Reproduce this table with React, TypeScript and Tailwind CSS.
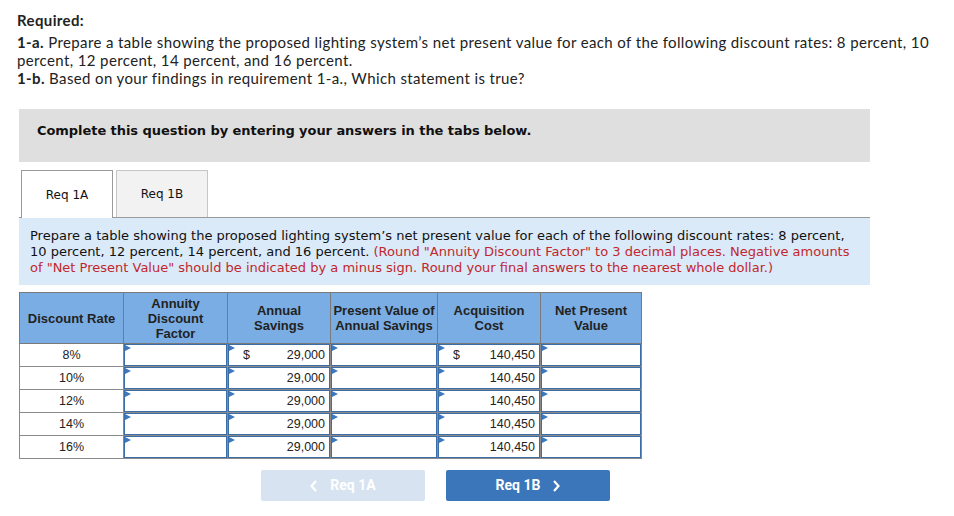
import React from "react";

const rates = ["8%", "10%", "12%", "14%", "16%"];

function Flag() {
  return (
    <svg
      className="absolute left-0 top-0"
      width="6"
      height="7"
      viewBox="0 0 6 7"
    >
      <polygon points="0,0 6,3 0,6" fill="#3a78c2" />
    </svg>
  );
}

function InputCell({ dollar, value }: { dollar?: boolean; value?: string }) {
  return (
    <td className="border border-[#8a8a8a] p-0 h-[23px]">
      <div className="relative h-[22px] border border-[#3d6da6] bg-white flex items-center pr-[4px]">
        <Flag />
        {dollar ? <span className="ml-[14px]">$</span> : null}
        {value ? <span className="ml-auto">{value}</span> : null}
      </div>
    </td>
  );
}

export default function App() {
  return (
    <div className="w-[954px] h-[516px] bg-white overflow-hidden">
      <div
        className="pl-[17px] pt-[11px] pr-[16px] text-[15px] leading-[18px] tracking-[0.38px] text-[#222]"
        style={{ fontFamily: "Lato, 'Open Sans', sans-serif" }}
      >
        <div className="font-bold mb-[4px]">Required:</div>
        <div>
          <span className="font-bold">1-a.</span> Prepare a table showing the proposed lighting
          system’s net present value for each of the following discount rates: 8 percent, 10
          percent, 12 percent, 14 percent, and 16 percent.
        </div>
        <div>
          <span className="font-bold">1-b.</span> Based on your findings in requirement 1-a.,
          Which statement is true?
        </div>
      </div>

      <div
        className="ml-[19px] mt-[22px] w-[851px] h-[53px] bg-[#dfdfdf] pl-[18px] pt-[13px] text-[13px] leading-[18px] tracking-[-0.06px] font-bold text-[#111]"
        style={{ fontFamily: "'DejaVu Sans', Verdana, sans-serif" }}
      >
        Complete this question by entering your answers in the tabs below.
      </div>

      <div
        className="ml-[19px] mt-[8px] w-[851px]"
        style={{ fontFamily: "'DejaVu Sans', Verdana, sans-serif" }}
      >
        <div className="flex gap-[3px] pl-[2px] border-b border-[#9a9a9a] h-[48px] items-end">
          <div className="w-[92px] h-[48px] -mb-px bg-white border border-b-0 border-[#9a9a9a] flex items-center justify-center text-[12px] text-[#111]">
            Req 1A
          </div>
          <div className="w-[92px] h-[47px] bg-[#f2f2f2] border border-b-0 border-[#c6c6c6] flex items-center justify-center text-[12px] text-[#111]">
            Req 1B
          </div>
        </div>
        <div className="bg-[#dbeaf8] h-[67px] pl-[11px] pr-[10px] pt-[10px] text-[13px] leading-[16px] text-[#111]">
          Prepare a table showing the proposed lighting system’s net present value for each of
          the following discount rates: 8 percent, 10 percent, 12 percent, 14 percent, and 16
          percent.{" "}
          <span className="text-[#c0272d]">
            (Round "Annuity Discount Factor" to 3 decimal places. Negative amounts of "Net
            Present Value" should be indicated by a minus sign. Round your final answers to the
            nearest whole dollar.)
          </span>
        </div>
      </div>

      <table
        className="ml-[19px] mt-[7px] w-[622px] table-fixed border-collapse text-[12.5px] text-[#222]"
        style={{ fontFamily: "'Liberation Sans', Arial, sans-serif" }}
      >
        <colgroup>
          <col className="w-[104px]" />
          <col className="w-[104px]" />
          <col className="w-[103px]" />
          <col className="w-[107px]" />
          <col className="w-[103px]" />
          <col className="w-[101px]" />
        </colgroup>
        <thead>
          <tr className="bg-[#79ade3] h-[51px]">
            <th className="border border-[#7a7a7a] font-bold text-[13px] leading-[15px] px-[2px]">
              Discount Rate
            </th>
            <th className="border border-[#7a7a7a] font-bold text-[13px] leading-[15px] px-[2px]">
              Annuity
              <br />
              Discount
              <br />
              Factor
            </th>
            <th className="border border-[#7a7a7a] font-bold text-[13px] leading-[15px] px-[2px]">
              Annual
              <br />
              Savings
            </th>
            <th className="border border-[#7a7a7a] font-bold text-[13px] leading-[15px] px-[2px]">
              Present Value of
              <br />
              Annual Savings
            </th>
            <th className="border border-[#7a7a7a] font-bold text-[13px] leading-[15px] px-[2px]">
              Acquisition
              <br />
              Cost
            </th>
            <th className="border border-[#7a7a7a] font-bold text-[13px] leading-[15px] px-[2px]">
              Net Present
              <br />
              Value
            </th>
          </tr>
        </thead>
        <tbody>
          {rates.map((r, i) => (
            <tr key={r} className="h-[23px]">
              <td className="border border-[#8a8a8a] text-center p-0">{r}</td>
              <InputCell />
              <InputCell dollar={i === 0} value="29,000" />
              <InputCell />
              <InputCell dollar={i === 0} value="140,450" />
              <InputCell />
            </tr>
          ))}
        </tbody>
      </table>

      <div
        className="ml-[261px] mt-[11px] flex gap-[21px] text-[14px] font-bold"
        style={{ fontFamily: "Roboto, 'Liberation Sans', sans-serif" }}
      >
        <div className="w-[164px] h-[31px] rounded-[2px] bg-[#d7e3f1] text-white flex items-center justify-center gap-[12px]">
          <svg width="8" height="12" viewBox="0 0 8 12">
            <path d="M6 1 L1.5 6 L6 11" stroke="white" strokeWidth="2.2" fill="none" />
          </svg>
          <span>Req 1A</span>
        </div>
        <div className="w-[164px] h-[31px] rounded-[2px] bg-[#3a76b9] text-white flex items-center justify-center gap-[12px]">
          <span>Req 1B</span>
          <svg width="8" height="12" viewBox="0 0 8 12">
            <path d="M2 1 L6.5 6 L2 11" stroke="white" strokeWidth="2.2" fill="none" />
          </svg>
        </div>
      </div>
    </div>
  );
}
